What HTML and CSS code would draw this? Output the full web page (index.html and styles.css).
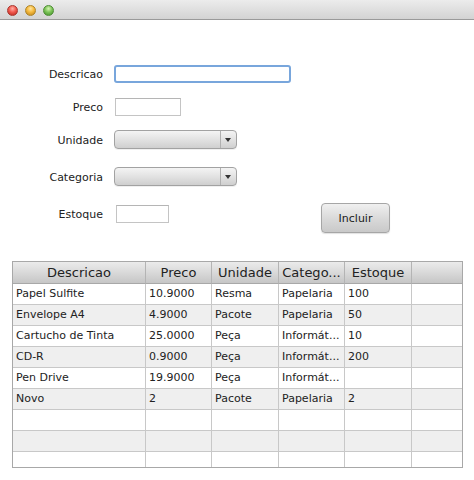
FILE: index.html
```
<!DOCTYPE html>
<html>
<head>
<meta charset="utf-8">
<link rel="stylesheet" href="styles.css">
</head>
<body>
<div class="window">
  <div class="titlebar">
    <span class="light red"></span>
    <span class="light yellow"></span>
    <span class="light green"></span>
  </div>
  <div class="content">
    <div class="form">
      <label class="lbl">Descricao</label>
      <div class="field"><input class="text focus" type="text"></div>
      <label class="lbl">Preco</label>
      <div class="field"><input class="text preco" type="text"></div>
      <label class="lbl lbl-combo">Unidade</label>
      <div class="field"><div class="combo"><span class="combo-arrow"></span></div></div>
      <label class="lbl lbl-combo">Categoria</label>
      <div class="field"><div class="combo"><span class="combo-arrow"></span></div></div>
      <label class="lbl">Estoque</label>
      <div class="field field-row"><input class="text estoque" type="text"><button class="btn">Incluir</button></div>
    </div>
    <div class="table-wrap">
      <table class="grid">
        <thead>
          <tr><th class="c1">Descricao</th><th class="c2">Preco</th><th class="c3">Unidade</th><th class="c4">Catego...</th><th class="c5">Estoque</th><th class="c6"></th></tr>
        </thead>
        <tbody>
          <tr><td>Papel Sulfite</td><td>10.9000</td><td>Resma</td><td>Papelaria</td><td>100</td><td></td></tr>
          <tr><td>Envelope A4</td><td>4.9000</td><td>Pacote</td><td>Papelaria</td><td>50</td><td></td></tr>
          <tr><td>Cartucho de Tinta</td><td>25.0000</td><td>Peça</td><td>Informát...</td><td>10</td><td></td></tr>
          <tr><td>CD-R</td><td>0.9000</td><td>Peça</td><td>Informát...</td><td>200</td><td></td></tr>
          <tr><td>Pen Drive</td><td>19.9000</td><td>Peça</td><td>Informát...</td><td></td><td></td></tr>
          <tr><td>Novo</td><td>2</td><td>Pacote</td><td>Papelaria</td><td>2</td><td></td></tr>
          <tr><td></td><td></td><td></td><td></td><td></td><td></td></tr>
          <tr><td></td><td></td><td></td><td></td><td></td><td></td></tr>
          <tr><td></td><td></td><td></td><td></td><td></td><td></td></tr>
        </tbody>
      </table>
    </div>
  </div>
</div>
</body>
</html>
```
FILE: styles.css
```
* { box-sizing: border-box; }
html, body { margin: 0; padding: 0; background: #ffffff; }
body {
  font-family: "DejaVu Sans", "Liberation Sans", sans-serif;
  font-size: 11px;
  color: #222;
  width: 474px;
  height: 480px;
  overflow: hidden;
}
.window { width: 474px; height: 480px; background: #fff; }
.titlebar {
  height: 20px;
  background: linear-gradient(#ececec, #d3d3d3);
  border-bottom: 1px solid #9a9a9a;
  display: flex;
  align-items: center;
  gap: 7px;
  padding-left: 7px;
  padding-top: 1px;
}
.light {
  width: 11px; height: 11px; border-radius: 50%;
  display: block;
}
.red { background: radial-gradient(circle at 50% 30%, #ffb0a8 0%, #f25a4f 45%, #b7241b 100%); border: 1px solid #a8372f; }
.yellow { background: radial-gradient(circle at 50% 30%, #ffe6a0 0%, #f5b93d 45%, #b9801a 100%); border: 1px solid #ae8427; }
.green { background: radial-gradient(circle at 50% 30%, #d6f5b2 0%, #7ec55a 45%, #3f8d27 100%); border: 1px solid #4f8d35; }

.content { padding: 45px 12px 0 12px; }
.form {
  display: grid;
  grid-template-columns: 91px auto;
  grid-template-rows: 33px 32px 37px 38px 56px;
  column-gap: 11px;
  align-items: start;
}
.lbl {
  text-align: right;
  line-height: 18px;
  padding-top: 1px;
  color: #222;
  font-size: 11px;
}
.lbl-combo { line-height: 19px; }
.field { display: flex; align-items: flex-start; }
.text {
  height: 18px;
  border: 1px solid #c4c4c4;
  border-top-color: #b5b5b5;
  background: #fff;
  padding: 0 3px;
  margin: 0;
  font: inherit;
  outline: none;
}
.text.focus {
  width: 177px;
  border: 2px solid #78a6dc;
  border-radius: 3px;
}
.text.preco { width: 66px; margin-left: 1px; }
.text.estoque { width: 53px; margin-left: 2px; }
.combo {
  position: relative;
  width: 123px;
  height: 19px;
  border: 1px solid #a2a2a2;
  border-radius: 4px;
  background: linear-gradient(#f4f4f4, #e2e2e2 50%, #cfcfcf);
  box-shadow: 0 1px 0 rgba(0,0,0,0.06);
}
.combo-arrow {
  position: absolute;
  right: 0; top: 0; bottom: 0;
  width: 16px;
  border-left: 1px solid #b0b0b0;
}
.combo-arrow::after {
  content: "";
  position: absolute;
  left: 4px; top: 7px;
  border-left: 3.5px solid transparent;
  border-right: 3.5px solid transparent;
  border-top: 4px solid #333;
}
.btn {
  margin: -2px 0 0 152px;
  width: 69px;
  height: 30px;
  border: 1px solid #a6a6a6;
  border-radius: 4px;
  background: linear-gradient(#f0f0f0, #dadada 50%, #c9c9c9);
  font: inherit;
  font-size: 11px;
  color: #1a1a1a;
  padding: 0;
  box-shadow: 0 1px 1px rgba(0,0,0,0.12);
}

.table-wrap {
  width: 451px;
  height: 207px;
  border: 1px solid #a8a8a8;
  overflow: hidden;
}
.grid {
  width: 449px;
  table-layout: fixed;
  border-collapse: separate;
  border-spacing: 0;
}
.grid th, .grid td {
  padding: 0 0 0 3px;
  border-right: 1px solid #c8c8c8;
  border-bottom: 1px solid #c8c8c8;
  white-space: nowrap;
  overflow: hidden;
  text-align: left;
  font-weight: normal;
}
.grid th:last-child, .grid td:last-child { border-right: none; }
.grid th {
  line-height: 21px;
  font-size: 13px;
  text-align: center;
  padding: 0;
  color: #222;
  background: linear-gradient(#ebebeb, #d9d9d9 50%, #c6c6c6);
  border-right-color: #b4b4b4;
  border-bottom-color: #a8a8a8;
}
.grid td { line-height: 20px; height: 21px; color: #222; }
.grid tbody tr:nth-child(even) td { background: #efefef; }
.c1 { width: 133px; }
.c2 { width: 66px; }
.c3 { width: 67px; }
.c4 { width: 66px; }
.c5 { width: 67px; }
.c6 { width: 50px; }
```
